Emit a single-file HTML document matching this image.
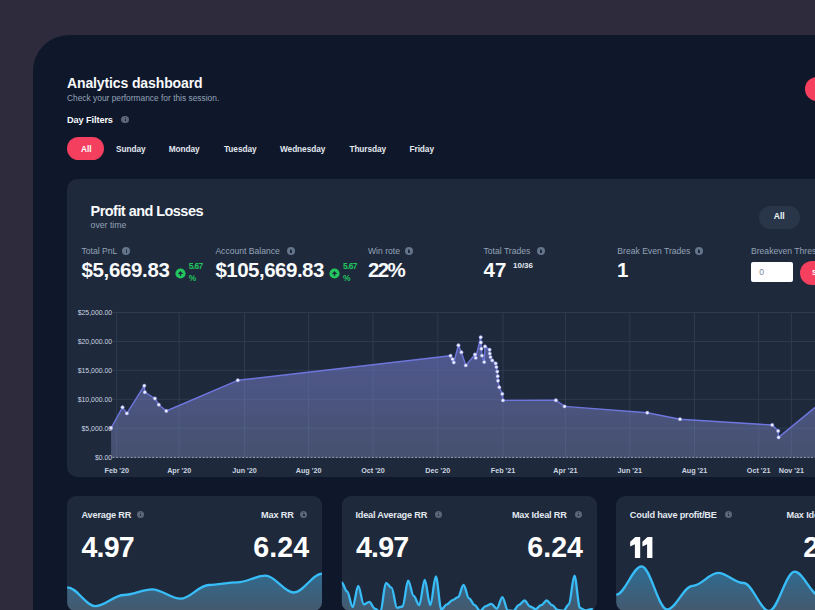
<!DOCTYPE html>
<html><head><meta charset="utf-8"><style>
*{margin:0;padding:0;box-sizing:border-box}
html,body{width:815px;height:610px;overflow:hidden;background:#2e2b3c;font-family:"Liberation Sans",sans-serif}
.t{position:absolute;white-space:pre;line-height:1}
.i{position:absolute;border-radius:50%}
.b{position:absolute}
svg{position:absolute;left:0;top:0}
</style></head><body>
<div class="b" style="left:33px;top:35px;width:900px;height:700px;background:#0f172a;border-top-left-radius:36px"></div>
<div class="b" style="left:805px;top:77px;width:80px;height:24px;background:#f43f5e;border-radius:12px"></div>
<div class="t" style="left:67.00px;top:75.85px;font-size:14px;color:#f8fafc;font-weight:bold;letter-spacing:-0.12px;">Analytics dashboard</div>
<div class="t" style="left:67.00px;top:93.89px;font-size:8.4px;color:#94a3b8;font-weight:normal;">Check your performance for this session.</div>
<div class="t" style="left:67.00px;top:116.21px;font-size:9.2px;color:#f8fafc;font-weight:bold;letter-spacing:-0.1px;">Day Filters</div>
<div class="i" style="left:121.40px;top:115.90px;width:7.20px;height:7.20px;background:#5b6678"></div>
<div class="b" style="left:124.59px;top:118.60px;width:1.41px;height:2.70px;background:#0f172a;border-radius:0.5px"></div>
<div class="i" style="left:124.50px;top:117.27px;width:1px;height:1px;background:#0f172a;opacity:.8"></div>
<div class="b" style="left:67px;top:137px;width:37px;height:23px;background:#f43f5e;border-radius:12px"></div>
<div class="t" style="left:81.00px;top:144.57px;font-size:8.3px;color:#ffffff;font-weight:bold;">All</div>
<div class="t" style="left:116.00px;top:144.57px;font-size:8.3px;color:#e2e8f0;font-weight:bold;letter-spacing:-0.08px;">Sunday</div>
<div class="t" style="left:168.70px;top:144.57px;font-size:8.3px;color:#e2e8f0;font-weight:bold;letter-spacing:-0.08px;">Monday</div>
<div class="t" style="left:224.00px;top:144.57px;font-size:8.3px;color:#e2e8f0;font-weight:bold;letter-spacing:-0.08px;">Tuesday</div>
<div class="t" style="left:280.00px;top:144.57px;font-size:8.3px;color:#e2e8f0;font-weight:bold;letter-spacing:-0.08px;">Wednesday</div>
<div class="t" style="left:349.40px;top:144.57px;font-size:8.3px;color:#e2e8f0;font-weight:bold;letter-spacing:-0.08px;">Thursday</div>
<div class="t" style="left:409.50px;top:144.57px;font-size:8.3px;color:#e2e8f0;font-weight:bold;letter-spacing:-0.08px;">Friday</div>
<div class="b" style="left:67px;top:179px;width:900px;height:297.5px;background:#1e293b;border-radius:10px"></div>
<div class="t" style="left:90.60px;top:203.73px;font-size:14.5px;color:#f8fafc;font-weight:bold;letter-spacing:-0.55px;">Profit and Losses</div>
<div class="t" style="left:90.60px;top:220.64px;font-size:8.7px;color:#94a3b8;font-weight:normal;">over time</div>
<div class="b" style="left:759px;top:205.5px;width:40.5px;height:23.5px;background:#293548;border-radius:12px"></div>
<div class="t" style="left:773.70px;top:212.02px;font-size:8.6px;color:#f1f5f9;font-weight:bold;">All</div>
<div class="t" style="left:81.50px;top:247.42px;font-size:8.6px;color:#94a3b8;font-weight:normal;">Total PnL</div>
<div class="i" style="left:122.20px;top:247.20px;width:8.00px;height:8.00px;background:#64748b"></div>
<div class="b" style="left:125.75px;top:250.20px;width:1.50px;height:3.00px;background:#1e293b;border-radius:0.5px"></div>
<div class="i" style="left:125.70px;top:248.72px;width:1px;height:1px;background:#1e293b;opacity:.8"></div>
<div class="t" style="left:215.40px;top:247.42px;font-size:8.6px;color:#94a3b8;font-weight:normal;">Account Balance</div>
<div class="i" style="left:286.60px;top:247.20px;width:8.00px;height:8.00px;background:#64748b"></div>
<div class="b" style="left:290.15px;top:250.20px;width:1.50px;height:3.00px;background:#1e293b;border-radius:0.5px"></div>
<div class="i" style="left:290.10px;top:248.72px;width:1px;height:1px;background:#1e293b;opacity:.8"></div>
<div class="t" style="left:368.00px;top:247.42px;font-size:8.6px;color:#94a3b8;font-weight:normal;">Win rote</div>
<div class="i" style="left:404.80px;top:247.20px;width:8.00px;height:8.00px;background:#64748b"></div>
<div class="b" style="left:408.35px;top:250.20px;width:1.50px;height:3.00px;background:#1e293b;border-radius:0.5px"></div>
<div class="i" style="left:408.30px;top:248.72px;width:1px;height:1px;background:#1e293b;opacity:.8"></div>
<div class="t" style="left:483.50px;top:247.42px;font-size:8.6px;color:#94a3b8;font-weight:normal;">Total Trades</div>
<div class="i" style="left:536.90px;top:247.20px;width:8.00px;height:8.00px;background:#64748b"></div>
<div class="b" style="left:540.45px;top:250.20px;width:1.50px;height:3.00px;background:#1e293b;border-radius:0.5px"></div>
<div class="i" style="left:540.40px;top:248.72px;width:1px;height:1px;background:#1e293b;opacity:.8"></div>
<div class="t" style="left:617.30px;top:247.42px;font-size:8.6px;color:#94a3b8;font-weight:normal;">Break Even Trades</div>
<div class="i" style="left:694.80px;top:247.20px;width:8.00px;height:8.00px;background:#64748b"></div>
<div class="b" style="left:698.35px;top:250.20px;width:1.50px;height:3.00px;background:#1e293b;border-radius:0.5px"></div>
<div class="i" style="left:698.30px;top:248.72px;width:1px;height:1px;background:#1e293b;opacity:.8"></div>
<div class="t" style="left:751.00px;top:247.42px;font-size:8.6px;color:#94a3b8;font-weight:normal;">Breakeven Threshold</div>
<div class="t" style="left:81.50px;top:260.15px;font-size:20.5px;color:#f8fafc;font-weight:bold;letter-spacing:-0.35px;">$5,669.83</div>
<div class="t" style="left:215.40px;top:260.15px;font-size:20.5px;color:#f8fafc;font-weight:bold;letter-spacing:-0.5px;">$105,669.83</div>
<div class="t" style="left:368.00px;top:260.15px;font-size:20.5px;color:#f8fafc;font-weight:bold;letter-spacing:-1.6px;">22%</div>
<div class="t" style="left:483.50px;top:260.15px;font-size:20.5px;color:#f8fafc;font-weight:bold;">47</div>
<div class="t" style="left:513.00px;top:262.33px;font-size:8px;color:#e2e8f0;font-weight:bold;">10/36</div>
<div class="t" style="left:617.00px;top:260.15px;font-size:20.5px;color:#f8fafc;font-weight:bold;">1</div>
<svg style="left:174.50px;top:267.50px" width="11" height="11" viewBox="-5.5 -5.5 11 11"><circle r="5.1" fill="#22c55e"/><path d="M-2.7,0.5 L0,-2.5 L2.7,0.5 Z" fill="#1e293b"/><rect x="-0.7" y="-0.2" width="1.4" height="2.6" fill="#1e293b"/></svg>
<div class="t" style="left:188.70px;top:261.99px;font-size:8.4px;color:#22c55e;font-weight:bold;letter-spacing:-0.6px;">5.67</div>
<div class="t" style="left:188.70px;top:273.69px;font-size:8.4px;color:#22c55e;font-weight:bold;letter-spacing:-0.3px;">%</div>
<svg style="left:328.50px;top:267.50px" width="11" height="11" viewBox="-5.5 -5.5 11 11"><circle r="5.1" fill="#22c55e"/><path d="M-2.7,0.5 L0,-2.5 L2.7,0.5 Z" fill="#1e293b"/><rect x="-0.7" y="-0.2" width="1.4" height="2.6" fill="#1e293b"/></svg>
<div class="t" style="left:343.00px;top:261.99px;font-size:8.4px;color:#22c55e;font-weight:bold;letter-spacing:-0.6px;">5.67</div>
<div class="t" style="left:343.00px;top:273.69px;font-size:8.4px;color:#22c55e;font-weight:bold;letter-spacing:-0.3px;">%</div>
<div class="b" style="left:751px;top:261.5px;width:41.5px;height:20.5px;background:#ffffff;border-radius:2px"></div>
<div class="t" style="left:759.20px;top:267.52px;font-size:8.6px;color:#7c8595;font-weight:normal;">0</div>
<div class="b" style="left:800px;top:261.3px;width:60px;height:23.8px;background:#f43f5e;border-radius:12px"></div>
<div class="t" style="left:812.00px;top:268.73px;font-size:8px;color:#ffffff;font-weight:bold;">S</div>
<svg width="815" height="610" viewBox="0 0 815 610">
<defs>
<linearGradient id="af" x1="0" y1="0" x2="0" y2="1" gradientUnits="objectBoundingBox"><stop offset="0" stop-color="#6d74c8" stop-opacity="0.62"/><stop offset="1" stop-color="#7c86b8" stop-opacity="0.42"/></linearGradient>
<linearGradient id="wf" x1="0" y1="0" x2="0" y2="1"><stop offset="0" stop-color="#3b82b0" stop-opacity="0.55"/><stop offset="1" stop-color="#64748b" stop-opacity="0.55"/></linearGradient>



</defs>

<line x1="112.6" y1="312.5" x2="815" y2="312.5" stroke="#2e3b50" stroke-width="1"/>
<line x1="112.6" y1="341.4" x2="815" y2="341.4" stroke="#2e3b50" stroke-width="1"/>
<line x1="112.6" y1="370.3" x2="815" y2="370.3" stroke="#2e3b50" stroke-width="1"/>
<line x1="112.6" y1="399.3" x2="815" y2="399.3" stroke="#2e3b50" stroke-width="1"/>
<line x1="112.6" y1="428.2" x2="815" y2="428.2" stroke="#2e3b50" stroke-width="1"/>
<line x1="116.7" y1="312.5" x2="116.7" y2="457.4" stroke="#2e3b50" stroke-width="1"/>
<line x1="179.2" y1="312.5" x2="179.2" y2="457.4" stroke="#2e3b50" stroke-width="1"/>
<line x1="244.5" y1="312.5" x2="244.5" y2="457.4" stroke="#2e3b50" stroke-width="1"/>
<line x1="308.6" y1="312.5" x2="308.6" y2="457.4" stroke="#2e3b50" stroke-width="1"/>
<line x1="373" y1="312.5" x2="373" y2="457.4" stroke="#2e3b50" stroke-width="1"/>
<line x1="437.8" y1="312.5" x2="437.8" y2="457.4" stroke="#2e3b50" stroke-width="1"/>
<line x1="503" y1="312.5" x2="503" y2="457.4" stroke="#2e3b50" stroke-width="1"/>
<line x1="565.4" y1="312.5" x2="565.4" y2="457.4" stroke="#2e3b50" stroke-width="1"/>
<line x1="629.8" y1="312.5" x2="629.8" y2="457.4" stroke="#2e3b50" stroke-width="1"/>
<line x1="694.5" y1="312.5" x2="694.5" y2="457.4" stroke="#2e3b50" stroke-width="1"/>
<line x1="758.7" y1="312.5" x2="758.7" y2="457.4" stroke="#2e3b50" stroke-width="1"/>
<line x1="791.4" y1="312.5" x2="791.4" y2="457.4" stroke="#2e3b50" stroke-width="1"/>
<path d="M111.1,428.0 L122.5,407.3 L126.9,413.4 L144.3,385.7 L144.8,392.2 L154.9,398.5 L158.8,404.7 L166.3,411.0 L237.8,380.3 L450.5,355.8 L452.5,359.1 L453.8,362.5 L458.4,345.3 L461.4,352.3 L465.8,365.4 L475.0,354.5 L475.7,357.9 L480.7,337.2 L480.9,342.5 L481.4,348.8 L482.0,355.6 L484.2,362.1 L485.0,346.4 L489.6,349.7 L489.8,353.6 L490.5,357.1 L492.2,360.4 L495.7,363.4 L496.4,367.1 L497.3,371.6 L497.7,376.3 L498.0,380.8 L499.3,387.3 L502.3,393.9 L503.0,400.4 L555.9,400.3 L564.6,406.4 L647.3,412.8 L680.0,419.2 L772.2,425.0 L778.2,431.0 L778.6,437.4 L840,387.0 L840,457.4 L111.1,457.4 Z" fill="url(#af)"/>
<line x1="112.6" y1="457.4" x2="815" y2="457.4" stroke="#94a3b8" stroke-width="1" stroke-dasharray="2,1.6"/>
<path d="M111.1,428.0 L122.5,407.3 L126.9,413.4 L144.3,385.7 L144.8,392.2 L154.9,398.5 L158.8,404.7 L166.3,411.0 L237.8,380.3 L450.5,355.8 L452.5,359.1 L453.8,362.5 L458.4,345.3 L461.4,352.3 L465.8,365.4 L475.0,354.5 L475.7,357.9 L480.7,337.2 L480.9,342.5 L481.4,348.8 L482.0,355.6 L484.2,362.1 L485.0,346.4 L489.6,349.7 L489.8,353.6 L490.5,357.1 L492.2,360.4 L495.7,363.4 L496.4,367.1 L497.3,371.6 L497.7,376.3 L498.0,380.8 L499.3,387.3 L502.3,393.9 L503.0,400.4 L555.9,400.3 L564.6,406.4 L647.3,412.8 L680.0,419.2 L772.2,425.0 L778.2,431.0 L778.6,437.4 L840,387.0" fill="none" stroke="#6e76de" stroke-width="1.4" stroke-linejoin="round"/>
<circle cx="111.1" cy="428.0" r="1.7" fill="#eef0ff" stroke="#8088e0" stroke-width="0.5"/>
<circle cx="122.5" cy="407.3" r="1.7" fill="#eef0ff" stroke="#8088e0" stroke-width="0.5"/>
<circle cx="126.9" cy="413.4" r="1.7" fill="#eef0ff" stroke="#8088e0" stroke-width="0.5"/>
<circle cx="144.3" cy="385.7" r="1.7" fill="#eef0ff" stroke="#8088e0" stroke-width="0.5"/>
<circle cx="144.8" cy="392.2" r="1.7" fill="#eef0ff" stroke="#8088e0" stroke-width="0.5"/>
<circle cx="154.9" cy="398.5" r="1.7" fill="#eef0ff" stroke="#8088e0" stroke-width="0.5"/>
<circle cx="158.8" cy="404.7" r="1.7" fill="#eef0ff" stroke="#8088e0" stroke-width="0.5"/>
<circle cx="166.3" cy="411.0" r="1.7" fill="#eef0ff" stroke="#8088e0" stroke-width="0.5"/>
<circle cx="237.8" cy="380.3" r="1.7" fill="#eef0ff" stroke="#8088e0" stroke-width="0.5"/>
<circle cx="450.5" cy="355.8" r="1.7" fill="#eef0ff" stroke="#8088e0" stroke-width="0.5"/>
<circle cx="452.5" cy="359.1" r="1.7" fill="#eef0ff" stroke="#8088e0" stroke-width="0.5"/>
<circle cx="453.8" cy="362.5" r="1.7" fill="#eef0ff" stroke="#8088e0" stroke-width="0.5"/>
<circle cx="458.4" cy="345.3" r="1.7" fill="#eef0ff" stroke="#8088e0" stroke-width="0.5"/>
<circle cx="461.4" cy="352.3" r="1.7" fill="#eef0ff" stroke="#8088e0" stroke-width="0.5"/>
<circle cx="465.8" cy="365.4" r="1.7" fill="#eef0ff" stroke="#8088e0" stroke-width="0.5"/>
<circle cx="475.0" cy="354.5" r="1.7" fill="#eef0ff" stroke="#8088e0" stroke-width="0.5"/>
<circle cx="475.7" cy="357.9" r="1.7" fill="#eef0ff" stroke="#8088e0" stroke-width="0.5"/>
<circle cx="480.7" cy="337.2" r="1.7" fill="#eef0ff" stroke="#8088e0" stroke-width="0.5"/>
<circle cx="480.9" cy="342.5" r="1.7" fill="#eef0ff" stroke="#8088e0" stroke-width="0.5"/>
<circle cx="481.4" cy="348.8" r="1.7" fill="#eef0ff" stroke="#8088e0" stroke-width="0.5"/>
<circle cx="482.0" cy="355.6" r="1.7" fill="#eef0ff" stroke="#8088e0" stroke-width="0.5"/>
<circle cx="484.2" cy="362.1" r="1.7" fill="#eef0ff" stroke="#8088e0" stroke-width="0.5"/>
<circle cx="485.0" cy="346.4" r="1.7" fill="#eef0ff" stroke="#8088e0" stroke-width="0.5"/>
<circle cx="489.6" cy="349.7" r="1.7" fill="#eef0ff" stroke="#8088e0" stroke-width="0.5"/>
<circle cx="489.8" cy="353.6" r="1.7" fill="#eef0ff" stroke="#8088e0" stroke-width="0.5"/>
<circle cx="490.5" cy="357.1" r="1.7" fill="#eef0ff" stroke="#8088e0" stroke-width="0.5"/>
<circle cx="492.2" cy="360.4" r="1.7" fill="#eef0ff" stroke="#8088e0" stroke-width="0.5"/>
<circle cx="495.7" cy="363.4" r="1.7" fill="#eef0ff" stroke="#8088e0" stroke-width="0.5"/>
<circle cx="496.4" cy="367.1" r="1.7" fill="#eef0ff" stroke="#8088e0" stroke-width="0.5"/>
<circle cx="497.3" cy="371.6" r="1.7" fill="#eef0ff" stroke="#8088e0" stroke-width="0.5"/>
<circle cx="497.7" cy="376.3" r="1.7" fill="#eef0ff" stroke="#8088e0" stroke-width="0.5"/>
<circle cx="498.0" cy="380.8" r="1.7" fill="#eef0ff" stroke="#8088e0" stroke-width="0.5"/>
<circle cx="499.3" cy="387.3" r="1.7" fill="#eef0ff" stroke="#8088e0" stroke-width="0.5"/>
<circle cx="502.3" cy="393.9" r="1.7" fill="#eef0ff" stroke="#8088e0" stroke-width="0.5"/>
<circle cx="503.0" cy="400.4" r="1.7" fill="#eef0ff" stroke="#8088e0" stroke-width="0.5"/>
<circle cx="555.9" cy="400.3" r="1.7" fill="#eef0ff" stroke="#8088e0" stroke-width="0.5"/>
<circle cx="564.6" cy="406.4" r="1.7" fill="#eef0ff" stroke="#8088e0" stroke-width="0.5"/>
<circle cx="647.3" cy="412.8" r="1.7" fill="#eef0ff" stroke="#8088e0" stroke-width="0.5"/>
<circle cx="680.0" cy="419.2" r="1.7" fill="#eef0ff" stroke="#8088e0" stroke-width="0.5"/>
<circle cx="772.2" cy="425.0" r="1.7" fill="#eef0ff" stroke="#8088e0" stroke-width="0.5"/>
<circle cx="778.2" cy="431.0" r="1.7" fill="#eef0ff" stroke="#8088e0" stroke-width="0.5"/>
<circle cx="778.6" cy="437.4" r="1.7" fill="#eef0ff" stroke="#8088e0" stroke-width="0.5"/>
<text x="112.2" y="314.9" text-anchor="end" font-family="Liberation Sans" font-size="6.9" fill="#cbd5e1">$25,000.00</text>
<text x="112.2" y="343.79999999999995" text-anchor="end" font-family="Liberation Sans" font-size="6.9" fill="#cbd5e1">$20,000.00</text>
<text x="112.2" y="372.7" text-anchor="end" font-family="Liberation Sans" font-size="6.9" fill="#cbd5e1">$15,000.00</text>
<text x="112.2" y="401.7" text-anchor="end" font-family="Liberation Sans" font-size="6.9" fill="#cbd5e1">$10,000.00</text>
<text x="112.2" y="430.59999999999997" text-anchor="end" font-family="Liberation Sans" font-size="6.9" fill="#cbd5e1">$5,000.00</text>
<text x="112.2" y="459.79999999999995" text-anchor="end" font-family="Liberation Sans" font-size="6.9" fill="#cbd5e1">$0.00</text>
<text x="116.8" y="472.9" text-anchor="middle" font-family="Liberation Sans" font-size="7.2" font-weight="bold" fill="#cbd5e1">Feb '20</text>
<text x="179.2" y="472.9" text-anchor="middle" font-family="Liberation Sans" font-size="7.2" font-weight="bold" fill="#cbd5e1">Apr '20</text>
<text x="244.5" y="472.9" text-anchor="middle" font-family="Liberation Sans" font-size="7.2" font-weight="bold" fill="#cbd5e1">Jun '20</text>
<text x="308.6" y="472.9" text-anchor="middle" font-family="Liberation Sans" font-size="7.2" font-weight="bold" fill="#cbd5e1">Aug '20</text>
<text x="373" y="472.9" text-anchor="middle" font-family="Liberation Sans" font-size="7.2" font-weight="bold" fill="#cbd5e1">Oct '20</text>
<text x="437.8" y="472.9" text-anchor="middle" font-family="Liberation Sans" font-size="7.2" font-weight="bold" fill="#cbd5e1">Dec '20</text>
<text x="503" y="472.9" text-anchor="middle" font-family="Liberation Sans" font-size="7.2" font-weight="bold" fill="#cbd5e1">Feb '21</text>
<text x="565.4" y="472.9" text-anchor="middle" font-family="Liberation Sans" font-size="7.2" font-weight="bold" fill="#cbd5e1">Apr '21</text>
<text x="629.8" y="472.9" text-anchor="middle" font-family="Liberation Sans" font-size="7.2" font-weight="bold" fill="#cbd5e1">Jun '21</text>
<text x="694.5" y="472.9" text-anchor="middle" font-family="Liberation Sans" font-size="7.2" font-weight="bold" fill="#cbd5e1">Aug '21</text>
<text x="758.7" y="472.9" text-anchor="middle" font-family="Liberation Sans" font-size="7.2" font-weight="bold" fill="#cbd5e1">Oct '21</text>
<text x="791.4" y="472.9" text-anchor="middle" font-family="Liberation Sans" font-size="7.2" font-weight="bold" fill="#cbd5e1">Nov '21</text>
</svg>
<div class="b" style="left:67.2px;top:495.7px;width:255px;height:115.5px;background:#1e293b;border-radius:9px"></div>
<div class="b" style="left:341.6px;top:495.7px;width:255px;height:115.5px;background:#1e293b;border-radius:9px"></div>
<div class="b" style="left:616.1px;top:495.7px;width:255px;height:115.5px;background:#1e293b;border-radius:9px"></div>
<svg width="815" height="610" viewBox="0 0 815 610"><defs><linearGradient id="wg" gradientUnits="userSpaceOnUse" x1="0" y1="570" x2="0" y2="611"><stop offset="0" stop-color="#2f6b90"/><stop offset="1" stop-color="#44596e"/></linearGradient><clipPath id="c1"><rect x="67" y="495.7" width="255" height="115.5" rx="9"/></clipPath><clipPath id="c2"><rect x="341.6" y="495.7" width="255" height="115.5" rx="9"/></clipPath><clipPath id="c3"><rect x="616.2" y="495.7" width="255" height="115.5" rx="9"/></clipPath></defs>
<g clip-path="url(#c1)"><path d="M67.20,587.30 C77.12,587.30 85.61,606.20 95.53,606.20 C105.45,606.20 113.94,595.00 123.86,595.00 C133.78,595.00 142.27,589.40 152.19,589.40 C162.11,589.40 170.60,598.70 180.52,598.70 C190.44,598.70 198.93,585.00 208.85,585.00 C218.77,585.00 227.26,582.30 237.18,582.30 C247.10,582.30 255.59,575.70 265.51,575.70 C275.43,575.70 283.92,592.50 293.84,592.50 C303.76,592.50 312.25,573.60 322.17,573.60 L322.16999999999996,630 L67.2,630 Z" fill="url(#wg)"/><path d="M67.20,587.30 C77.12,587.30 85.61,606.20 95.53,606.20 C105.45,606.20 113.94,595.00 123.86,595.00 C133.78,595.00 142.27,589.40 152.19,589.40 C162.11,589.40 170.60,598.70 180.52,598.70 C190.44,598.70 198.93,585.00 208.85,585.00 C218.77,585.00 227.26,582.30 237.18,582.30 C247.10,582.30 255.59,575.70 265.51,575.70 C275.43,575.70 283.92,592.50 293.84,592.50 C303.76,592.50 312.25,573.60 322.17,573.60" fill="none" stroke="#38bdf8" stroke-width="2.3"/></g>
<g clip-path="url(#c2)"><path d="M341.60,582.50 C343.54,582.50 345.20,591.50 347.14,591.50 C349.08,591.50 350.75,607.00 352.69,607.00 C354.63,607.00 356.29,585.90 358.23,585.90 C360.17,585.90 361.83,604.40 363.77,604.40 C365.71,604.40 367.37,601.80 369.31,601.80 C371.26,601.80 372.92,608.70 374.86,608.70 C376.80,608.70 378.46,612.00 380.40,612.00 C382.34,612.00 384.00,582.90 385.94,582.90 C387.88,582.90 389.55,587.60 391.49,587.60 C393.43,587.60 395.09,607.80 397.03,607.80 C398.97,607.80 400.63,606.50 402.57,606.50 C404.51,606.50 406.18,580.70 408.12,580.70 C410.06,580.70 411.72,595.80 413.66,595.80 C415.60,595.80 417.26,605.20 419.20,605.20 C421.14,605.20 422.80,579.90 424.75,579.90 C426.69,579.90 428.35,605.20 430.29,605.20 C432.23,605.20 433.89,576.40 435.83,576.40 C437.77,576.40 439.43,609.50 441.37,609.50 C443.31,609.50 444.98,604.40 446.92,604.40 C448.86,604.40 450.52,600.10 452.46,600.10 C454.40,600.10 456.06,597.10 458.00,597.10 C459.94,597.10 461.61,585.00 463.55,585.00 C465.49,585.00 467.15,598.40 469.09,598.40 C471.03,598.40 472.69,605.20 474.63,605.20 C476.57,605.20 478.23,611.00 480.18,611.00 C482.12,611.00 483.78,606.10 485.72,606.10 C487.66,606.10 489.32,603.90 491.26,603.90 C493.20,603.90 494.86,608.70 496.80,608.70 C498.74,608.70 500.41,597.10 502.35,597.10 C504.29,597.10 505.95,610.40 507.89,610.40 C509.83,610.40 511.49,610.80 513.43,610.80 C515.37,610.80 517.04,604.80 518.98,604.80 C520.92,604.80 522.58,600.50 524.52,600.50 C526.46,600.50 528.12,606.50 530.06,606.50 C532.00,606.50 533.66,609.10 535.61,609.10 C537.55,609.10 539.21,605.20 541.15,605.20 C543.09,605.20 544.75,600.50 546.69,600.50 C548.63,600.50 550.29,605.20 552.23,605.20 C554.17,605.20 555.84,610.00 557.78,610.00 C559.72,610.00 561.38,610.80 563.32,610.80 C565.26,610.80 566.92,604.40 568.86,604.40 C570.80,604.40 572.47,575.60 574.41,575.60 C576.35,575.60 578.01,607.80 579.95,607.80 C581.89,607.80 583.55,610.40 585.49,610.40 C587.43,610.40 589.09,609.10 591.04,609.10 C592.98,609.10 594.64,610.40 596.58,610.40 L596.578,630 L341.6,630 Z" fill="url(#wg)"/><path d="M341.60,582.50 C343.54,582.50 345.20,591.50 347.14,591.50 C349.08,591.50 350.75,607.00 352.69,607.00 C354.63,607.00 356.29,585.90 358.23,585.90 C360.17,585.90 361.83,604.40 363.77,604.40 C365.71,604.40 367.37,601.80 369.31,601.80 C371.26,601.80 372.92,608.70 374.86,608.70 C376.80,608.70 378.46,612.00 380.40,612.00 C382.34,612.00 384.00,582.90 385.94,582.90 C387.88,582.90 389.55,587.60 391.49,587.60 C393.43,587.60 395.09,607.80 397.03,607.80 C398.97,607.80 400.63,606.50 402.57,606.50 C404.51,606.50 406.18,580.70 408.12,580.70 C410.06,580.70 411.72,595.80 413.66,595.80 C415.60,595.80 417.26,605.20 419.20,605.20 C421.14,605.20 422.80,579.90 424.75,579.90 C426.69,579.90 428.35,605.20 430.29,605.20 C432.23,605.20 433.89,576.40 435.83,576.40 C437.77,576.40 439.43,609.50 441.37,609.50 C443.31,609.50 444.98,604.40 446.92,604.40 C448.86,604.40 450.52,600.10 452.46,600.10 C454.40,600.10 456.06,597.10 458.00,597.10 C459.94,597.10 461.61,585.00 463.55,585.00 C465.49,585.00 467.15,598.40 469.09,598.40 C471.03,598.40 472.69,605.20 474.63,605.20 C476.57,605.20 478.23,611.00 480.18,611.00 C482.12,611.00 483.78,606.10 485.72,606.10 C487.66,606.10 489.32,603.90 491.26,603.90 C493.20,603.90 494.86,608.70 496.80,608.70 C498.74,608.70 500.41,597.10 502.35,597.10 C504.29,597.10 505.95,610.40 507.89,610.40 C509.83,610.40 511.49,610.80 513.43,610.80 C515.37,610.80 517.04,604.80 518.98,604.80 C520.92,604.80 522.58,600.50 524.52,600.50 C526.46,600.50 528.12,606.50 530.06,606.50 C532.00,606.50 533.66,609.10 535.61,609.10 C537.55,609.10 539.21,605.20 541.15,605.20 C543.09,605.20 544.75,600.50 546.69,600.50 C548.63,600.50 550.29,605.20 552.23,605.20 C554.17,605.20 555.84,610.00 557.78,610.00 C559.72,610.00 561.38,610.80 563.32,610.80 C565.26,610.80 566.92,604.40 568.86,604.40 C570.80,604.40 572.47,575.60 574.41,575.60 C576.35,575.60 578.01,607.80 579.95,607.80 C581.89,607.80 583.55,610.40 585.49,610.40 C587.43,610.40 589.09,609.10 591.04,609.10 C592.98,609.10 594.64,610.40 596.58,610.40" fill="none" stroke="#38bdf8" stroke-width="2.3"/></g>
<g clip-path="url(#c3)"><path d="M616.10,594.70 C625.02,594.70 632.68,566.30 641.60,566.30 C650.52,566.30 658.18,609.50 667.10,609.50 C676.02,609.50 683.68,585.80 692.60,585.80 C701.52,585.80 709.18,572.90 718.10,572.90 C727.02,572.90 734.68,583.00 743.60,583.00 C752.52,583.00 760.18,611.00 769.10,611.00 C778.02,611.00 785.68,571.60 794.60,571.60 C803.52,571.60 811.18,596.00 820.10,596.00 C829.02,596.00 836.68,590.00 845.60,590.00 C854.52,590.00 862.18,585.00 871.10,585.00 L871.1,630 L616.1,630 Z" fill="url(#wg)"/><path d="M616.10,594.70 C625.02,594.70 632.68,566.30 641.60,566.30 C650.52,566.30 658.18,609.50 667.10,609.50 C676.02,609.50 683.68,585.80 692.60,585.80 C701.52,585.80 709.18,572.90 718.10,572.90 C727.02,572.90 734.68,583.00 743.60,583.00 C752.52,583.00 760.18,611.00 769.10,611.00 C778.02,611.00 785.68,571.60 794.60,571.60 C803.52,571.60 811.18,596.00 820.10,596.00 C829.02,596.00 836.68,590.00 845.60,590.00 C854.52,590.00 862.18,585.00 871.10,585.00" fill="none" stroke="#38bdf8" stroke-width="2.3"/></g>
</svg>
<div class="t" style="left:81.50px;top:511.31px;font-size:9.2px;color:#e2e8f0;font-weight:bold;letter-spacing:-0.2px;">Average RR</div>
<div class="i" style="left:136.90px;top:510.90px;width:7.20px;height:7.20px;background:#5b6678"></div>
<div class="b" style="left:140.09px;top:513.60px;width:1.41px;height:2.70px;background:#1e293b;border-radius:0.5px"></div>
<div class="i" style="left:140.00px;top:512.27px;width:1px;height:1px;background:#1e293b;opacity:.8"></div>
<div class="t" style="left:261.10px;top:511.31px;font-size:9.2px;color:#e2e8f0;font-weight:bold;letter-spacing:-0.2px;">Max RR</div>
<div class="i" style="left:300.10px;top:510.90px;width:7.20px;height:7.20px;background:#5b6678"></div>
<div class="b" style="left:303.30px;top:513.60px;width:1.41px;height:2.70px;background:#1e293b;border-radius:0.5px"></div>
<div class="i" style="left:303.20px;top:512.27px;width:1px;height:1px;background:#1e293b;opacity:.8"></div>
<div class="t" style="left:81.50px;top:533.49px;font-size:28.6px;color:#ffffff;font-weight:bold;letter-spacing:-0.85px;">4.97</div>
<div class="t" style="left:253.30px;top:533.49px;font-size:28.6px;color:#ffffff;font-weight:bold;letter-spacing:0.05px;">6.24</div>
<div class="t" style="left:355.40px;top:511.31px;font-size:9.2px;color:#e2e8f0;font-weight:bold;letter-spacing:-0.2px;">Ideal Average RR</div>
<div class="i" style="left:434.70px;top:510.90px;width:7.20px;height:7.20px;background:#5b6678"></div>
<div class="b" style="left:437.90px;top:513.60px;width:1.41px;height:2.70px;background:#1e293b;border-radius:0.5px"></div>
<div class="i" style="left:437.80px;top:512.27px;width:1px;height:1px;background:#1e293b;opacity:.8"></div>
<div class="t" style="left:511.90px;top:511.31px;font-size:9.2px;color:#e2e8f0;font-weight:bold;letter-spacing:-0.2px;">Max Ideal RR</div>
<div class="i" style="left:574.60px;top:510.90px;width:7.20px;height:7.20px;background:#5b6678"></div>
<div class="b" style="left:577.80px;top:513.60px;width:1.41px;height:2.70px;background:#1e293b;border-radius:0.5px"></div>
<div class="i" style="left:577.70px;top:512.27px;width:1px;height:1px;background:#1e293b;opacity:.8"></div>
<div class="t" style="left:356.00px;top:533.49px;font-size:28.6px;color:#ffffff;font-weight:bold;letter-spacing:-0.85px;">4.97</div>
<div class="t" style="left:527.20px;top:533.49px;font-size:28.6px;color:#ffffff;font-weight:bold;letter-spacing:0.05px;">6.24</div>
<div class="t" style="left:629.80px;top:511.31px;font-size:9.2px;color:#e2e8f0;font-weight:bold;letter-spacing:-0.2px;">Could have profit/BE</div>
<div class="i" style="left:724.60px;top:510.90px;width:7.20px;height:7.20px;background:#5b6678"></div>
<div class="b" style="left:727.80px;top:513.60px;width:1.41px;height:2.70px;background:#1e293b;border-radius:0.5px"></div>
<div class="i" style="left:727.70px;top:512.27px;width:1px;height:1px;background:#1e293b;opacity:.8"></div>
<div class="t" style="left:786.50px;top:511.31px;font-size:9.2px;color:#e2e8f0;font-weight:bold;letter-spacing:-0.2px;">Max Ideal RR</div>
<div class="i" style="left:849.00px;top:510.90px;width:7.20px;height:7.20px;background:#5b6678"></div>
<div class="b" style="left:852.20px;top:513.60px;width:1.41px;height:2.70px;background:#1e293b;border-radius:0.5px"></div>
<div class="i" style="left:852.10px;top:512.27px;width:1px;height:1px;background:#1e293b;opacity:.8"></div>
<div class="t" style="left:630.40px;top:533.49px;font-size:28.6px;color:#ffffff;font-weight:bold;letter-spacing:-4.2px;"></div>
<div class="t" style="left:803.20px;top:533.49px;font-size:28.6px;color:#ffffff;font-weight:bold;letter-spacing:0.05px;">2.12</div>
<svg width="815" height="610"><path d="M635.3,536.9 H640.2 V557.9 H634.9 V544.2 L630.2,546.6 V541.8 Z M647.5,536.9 H652.4 V557.9 H647.1 V544.2 L642.4,546.6 V541.8 Z" fill="#ffffff"/></svg>
</body></html>
